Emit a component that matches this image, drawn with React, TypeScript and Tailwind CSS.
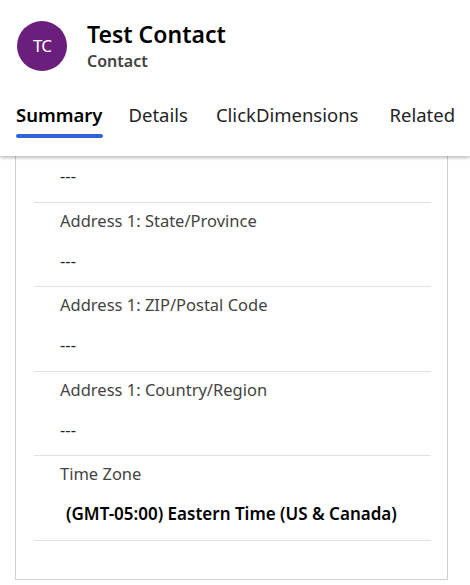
const rows = [
  { label: 'Address 1: City', value: '---' },
  { label: 'Address 1: State/Province', value: '---' },
  { label: 'Address 1: ZIP/Postal Code', value: '---' },
  { label: 'Address 1: Country/Region', value: '---' },
  { label: 'Time Zone', value: '(GMT-05:00) Eastern Time (US & Canada)', bold: true },
];

const tabs = [
  { name: 'Summary', gap: '' },
  { name: 'Details', gap: 'ml-[26px]' },
  { name: 'ClickDimensions', gap: 'ml-[28px]' },
  { name: 'Related', gap: 'ml-[31px]' },
];

export default function App() {
  return (
    <div className="w-[470px] h-[585px] overflow-hidden bg-white flex flex-col font-['Noto_Sans',sans-serif] text-[#242424]">
      {/* Header */}
      <div className="relative z-10 h-[156px] shrink-0 bg-white shadow-[0_2px_3px_rgba(0,0,0,0.25)]">
        <div className="flex items-center pl-[17px] pt-[20px]">
          <div className="w-[50px] h-[50px] rounded-full bg-[#6b1f7d] flex items-center justify-center text-white text-[17px] tracking-[-1px]">
            TC
          </div>
          <div className="ml-[20px] flex flex-col">
            <span className="text-[23px] font-semibold leading-[28px] text-black">Test Contact</span>
            <span className="mt-[2px] text-[16px] font-semibold leading-[22px] text-[#424242]">Contact</span>
          </div>
        </div>
        <div className="flex pl-[16px] mt-[28px]">
          {tabs.map((t, i) => (
            <div key={t.name} className={`flex flex-col ${t.gap}`}>
              <span className={`text-[18.5px] leading-[30px] ${i === 0 ? 'font-semibold text-black' : 'text-[#242424]'}`}>{t.name}</span>
              {i === 0 && <div className="mt-[4px] h-[4px] rounded-full bg-[#2b65d9]" />}
            </div>
          ))}
        </div>
      </div>

      {/* Scrolled content */}
      <div className="flex-1 overflow-hidden pl-[15px] pr-[22px]">
        <div className="-mt-[39px] border border-[#d1d1d1] pl-[18px] pr-[16px] pb-[38px]">
          {rows.map((r) => (
            <div key={r.label} className="h-[84.5px] border-b border-[#e1e1e1] pl-[26px] pt-[7px]">
              <div className="text-[16.5px] leading-[22px] text-[#444]">{r.label}</div>
              <div className={`mt-[18px] leading-[22px] ${r.bold ? 'text-[17px] font-semibold text-black pl-[6px]' : 'text-[16.5px] text-[#242424]'}`}>
                {r.value}
              </div>
            </div>
          ))}
        </div>
      </div>
    </div>
  );
}
